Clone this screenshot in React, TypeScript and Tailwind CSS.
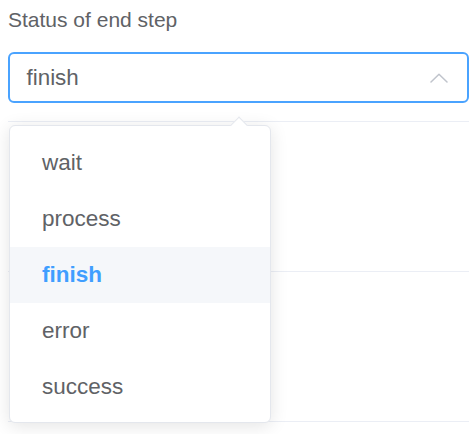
import React from "react";

const items = ["wait", "process", "finish", "error", "success"];

export default function App() {
  return (
    <div
      className="relative w-[474px] h-[434px] bg-white overflow-hidden"
      style={{ fontFamily: '"Liberation Sans", Arial, sans-serif' }}
    >
      <div className="pt-[9px] pl-[8px] text-[21px] leading-[21px] text-[#606266]">
        Status of end step
      </div>
      <div className="mt-[22px] ml-[8px] w-[461px] h-[51px] rounded-[6px] border-2 border-[#4aa3ff] flex items-center justify-between pl-[16.5px] pr-[19px]">
        <span className="text-[22.4px] text-[#606266]">finish</span>
        <svg width="18" height="10" viewBox="0 0 18 10" fill="none">
          <path d="M1 9 L9 1.2 L17 9" stroke="#c0c4cc" strokeWidth="1.5" strokeLinecap="round" strokeLinejoin="round" />
        </svg>
      </div>
      <div className="mt-[18px] ml-[8px] w-[461px] border-t border-[#ebeef5]">
        <div className="h-[150px] border-b border-[#ebeef5]" />
        <div className="h-[150px] border-b border-[#ebeef5]" />
      </div>

      <div className="absolute left-[9px] top-[125px] w-[262px] h-[298px] bg-white rounded-[6px] border border-[#e4e7ed] shadow-[0_3px_18px_rgba(0,0,0,0.11)] pt-[9px]">
        <div className="absolute -top-[7px] left-[223px] w-[12px] h-[12px] rotate-45 bg-white border-l border-t border-[#e4e7ed]" />
        {items.map((it) => {
          const sel = it === "finish";
          return (
            <div
              key={it}
              className={
                sel
                  ? "h-[56px] flex items-center pl-[32px] text-[22.5px] font-bold text-[#409eff] bg-[#f5f7fa]"
                  : "h-[56px] flex items-center pl-[32px] text-[22.5px] text-[#606266]"
              }
            >
              {it}
            </div>
          );
        })}
      </div>
    </div>
  );
}
